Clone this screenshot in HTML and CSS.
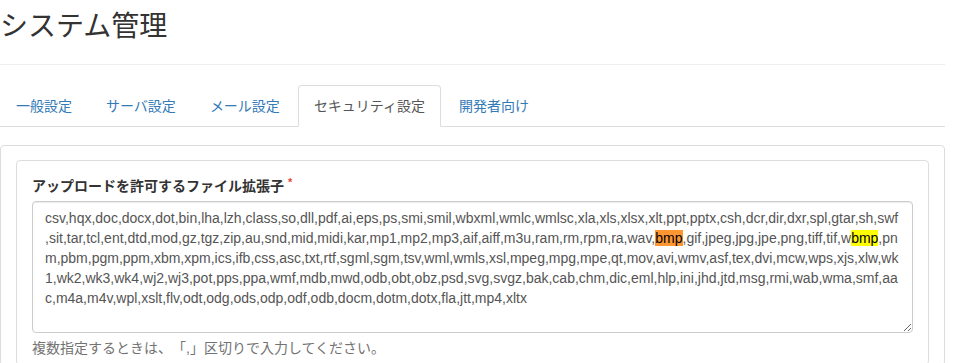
FILE: index.html
```html
<!DOCTYPE html>
<html lang="ja">
<head>
  <meta charset="UTF-8">
  <title>システム管理</title>
  <link rel="stylesheet" href="styles.css">
</head>
<body>
  <div class="container">
    <div class="page-header">
      <h1>システム管理</h1>
    </div>

    <ul class="nav-tabs">
      <li><a href="#">一般設定</a></li>
      <li><a href="#">サーバ設定</a></li>
      <li><a href="#">メール設定</a></li>
      <li class="active"><a href="#">セキュリティ設定</a></li>
      <li><a href="#">開発者向け</a></li>
    </ul>

    <div class="tab-content">
      <div class="panel">
        <div class="form-group">
          <label class="control-label">アップロードを許可するファイル拡張子 <span class="required">*</span></label>
          <div class="form-control">csv,hqx,doc,docx,dot,bin,lha,lzh,class,so,dll,pdf,ai,eps,ps,smi,smil,wbxml,wmlc,wmlsc,xla,xls,xlsx,xlt,ppt,pptx,csh,dcr,dir,dxr,spl,gtar,sh,swf<br>,sit,tar,tcl,ent,dtd,mod,gz,tgz,zip,au,snd,mid,midi,kar,mp1,mp2,mp3,aif,aiff,m3u,ram,rm,rpm,ra,wav,<span class="hit current">bmp</span>,gif,jpeg,jpg,jpe,png,tiff,tif,w<span class="hit">bmp</span>,pn<br>m,pbm,pgm,ppm,xbm,xpm,ics,ifb,css,asc,txt,rtf,sgml,sgm,tsv,wml,wmls,xsl,mpeg,mpg,mpe,qt,mov,avi,wmv,asf,tex,dvi,mcw,wps,xjs,xlw,wk<br>1,wk2,wk3,wk4,wj2,wj3,pot,pps,ppa,wmf,mdb,mwd,odb,obt,obz,psd,svg,svgz,bak,cab,chm,dic,eml,hlp,ini,jhd,jtd,msg,rmi,wab,wma,smf,aa<br>c,m4a,m4v,wpl,xslt,flv,odt,odg,ods,odp,odf,odb,docm,dotm,dotx,fla,jtt,mp4,xltx</div>
          <p class="help-block">複数指定するときは、「,」区切りで入力してください。</p>
        </div>
      </div>
    </div>
  </div>
</body>
</html>
```

FILE: styles.css
```css
body {
  margin: 0;
  font-family: "Liberation Sans", "Noto Sans CJK JP", sans-serif;
  font-size: 14px;
  line-height: 20px;
  color: #333;
  background: #fff;
  text-spacing-trim: space-all;
}

.container {
  width: 945px;
}

.page-header {
  padding: 11px 0 22px;
  border-bottom: 1px solid #eee;
  margin-bottom: 20px;
}

h1 {
  margin: 0;
  font-size: 28px;
  line-height: 31px;
  font-weight: 400;
  color: #333;
}

.nav-tabs {
  display: flex;
  list-style: none;
  margin: 0;
  padding: 0;
  border-bottom: 1px solid #ddd;
}

.nav-tabs li {
  margin-right: 2px;
  margin-bottom: -1px;
}

.nav-tabs a {
  display: block;
  padding: 10px 15px;
  color: #337ab7;
  text-decoration: none;
  border: 1px solid transparent;
  border-radius: 4px 4px 0 0;
}

.nav-tabs .active a {
  color: #555;
  background: #fff;
  border-color: #ddd #ddd transparent;
}

.tab-content {
  margin-top: 18px;
}

.panel {
  border: 1px solid #ddd;
  border-radius: 4px;
  padding: 14px 15px 0;
}

.form-group {
  border: 1px solid #ddd;
  border-radius: 4px;
  padding: 15px 15px 6px;
}

.control-label {
  display: block;
  font-weight: bold;
  margin-bottom: 5px;
}

.required {
  color: #e0483a;
  font-size: 11px;
  vertical-align: top;
  position: relative;
  top: -4px;
}

.form-control {
  height: 118px;
  padding: 6px 12px;
  border: 1px solid #ccc;
  border-radius: 4px;
  box-shadow: inset 0 1px 1px rgba(0,0,0,0.075);
  color: #555;
  white-space: nowrap;
  overflow: hidden;
  resize: vertical;
}

.hit {
  background: #ffff00;
  color: #000;
}

.hit.current {
  background: #ff9632;
}

.help-block {
  margin: 5px 0 0;
  color: #737373;
}
```
